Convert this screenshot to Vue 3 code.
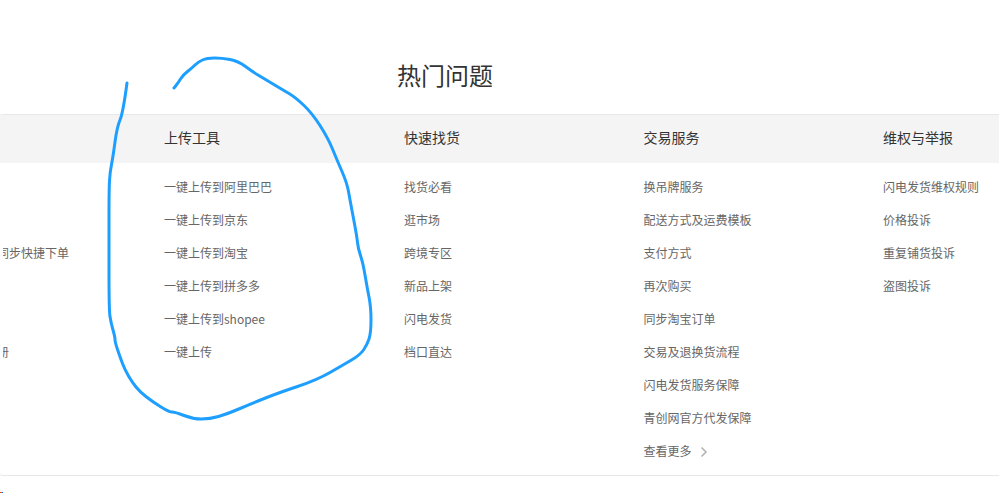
<script setup>
const columns = [
  { title: '', clipped: true, items: ['', '', '同步快捷下单', '', '', '册'] },
  { title: '上传工具', items: ['一键上传到阿里巴巴', '一键上传到京东', '一键上传到淘宝', '一键上传到拼多多', '一键上传到shopee', '一键上传'] },
  { title: '快速找货', items: ['找货必看', '逛市场', '跨境专区', '新品上架', '闪电发货', '档口直达'] },
  { title: '交易服务', more: true, items: ['换吊牌服务', '配送方式及运费模板', '支付方式', '再次购买', '同步淘宝订单', '交易及退换货流程', '闪电发货服务保障', '青创网官方代发保障'] },
  { title: '维权与举报', items: ['闪电发货维权规则', '价格投诉', '重复铺货投诉', '盗图投诉'] }
]
const pts = [[127,83],[123,113],[117,127],[113,157],[110,172],[109,190],[109,240],[109,310],[111,323],[115,337],[115,342],[120,357],[125,370],[132,382],[140,392],[153,402],[169,412],[175,412],[193,419],[210,419],[227,414],[253,403],[278,393],[317,380],[343,365],[360,355],[367,345],[371,333],[371,307],[367,287],[363,263],[358,248],[357,237],[350,200],[347,183],[337,160],[328,138],[312,113],[295,97],[283,90],[263,78],[253,72],[238,61],[222,58],[207,58],[198,62],[192,68],[183,75],[178,83],[174,88]]
// Smooth the hand-drawn stroke: quadratic curves through the segment midpoints
let d = `M${pts[0][0]} ${pts[0][1]}`
for (let i = 1; i < pts.length - 1; i++) {
  const mx = (pts[i][0] + pts[i + 1][0]) / 2
  const my = (pts[i][1] + pts[i + 1][1]) / 2
  d += ` Q${pts[i][0]} ${pts[i][1]} ${mx} ${my}`
}
d += ` L${pts[pts.length - 1][0]} ${pts[pts.length - 1][1]}`
const stroke = d
</script>

<template>
  <div class="page">
    <h1 class="title">热门问题</h1>
    <section class="box">
      <div class="grid head">
        <div v-for="(c, i) in columns" :key="i" class="head-cell">{{ c.title }}</div>
      </div>
      <div class="grid body">
        <ul v-for="(c, i) in columns" :key="i" class="col" :class="{ clipped: c.clipped }">
          <li v-for="(t, j) in c.items" :key="j" class="item">{{ t }}</li>
          <li v-if="c.more" class="item more">
            查看更多
            <svg class="chev" width="8" height="12" viewBox="0 0 8 12"><polyline points="1.5,1.5 6,6 1.5,10.5" fill="none" stroke="#b4b4b4" stroke-width="1.6" /></svg>
          </li>
        </ul>
      </div>
    </section>
    <svg class="ink" width="999" height="493" viewBox="0 0 999 493">
      <path :d="stroke" fill="none" stroke="#1e9fff" stroke-width="3" stroke-linecap="round" stroke-linejoin="round" />
    </svg>
    <div class="pixels"></div>
  </div>
</template>

<style scoped>
.page {
  position: relative;
  width: 999px;
  height: 493px;
  overflow: hidden;
  background: #fff;
  font-family: "Noto Sans CJK SC", "Liberation Sans", sans-serif;
}
.title {
  width: 890px;
  margin: 0;
  padding-top: 57px;
  box-sizing: border-box;
  height: 114px;
  font-size: 24px;
  line-height: 36px;
  font-weight: 400;
  text-align: center;
  color: #333;
}
.box {
  width: 1040px;
  margin-left: -3px;
  border: 1px solid #e8e8e8;
  border-radius: 6px;
  height: 362px;
  box-sizing: border-box;
}
.grid {
  display: grid;
  grid-template-columns: 166px 240px 239.5px 239.5px 1fr;
}
.head {
  height: 48px;
  background: #f4f4f4;
  border-radius: 6px 6px 0 0;
  align-items: center;
}
.head-cell {
  font-size: 14px;
  line-height: 20px;
  color: #333;
  margin-top: -5px;
}
.body {
  padding-top: 7px;
}
.col {
  list-style: none;
  margin: 0;
  padding: 0;
  min-width: 0;
}
.clipped {
  margin-left: 5px;
  overflow: hidden;
}
.clipped .item {
  margin-left: -6px;
}
.item {
  height: 33px;
  font-size: 12px;
  line-height: 33px;
  color: #666;
  white-space: nowrap;
}
.more {
  display: flex;
  align-items: center;
  gap: 8px;
}
.chev {
  margin-top: 2px;
}
.ink {
  position: absolute;
  left: 0;
  top: 0;
  pointer-events: none;
}
.pixels {
  position: absolute;
  left: 0;
  bottom: 0;
  width: 3px;
  height: 1px;
  background: linear-gradient(to right, #f04a00 0 1px, #1aa64a 1px 2px, #1a5fe0 2px 3px);
}
</style>

<style>
html, body { margin: 0; overflow: hidden; background: #fff; }
</style>
